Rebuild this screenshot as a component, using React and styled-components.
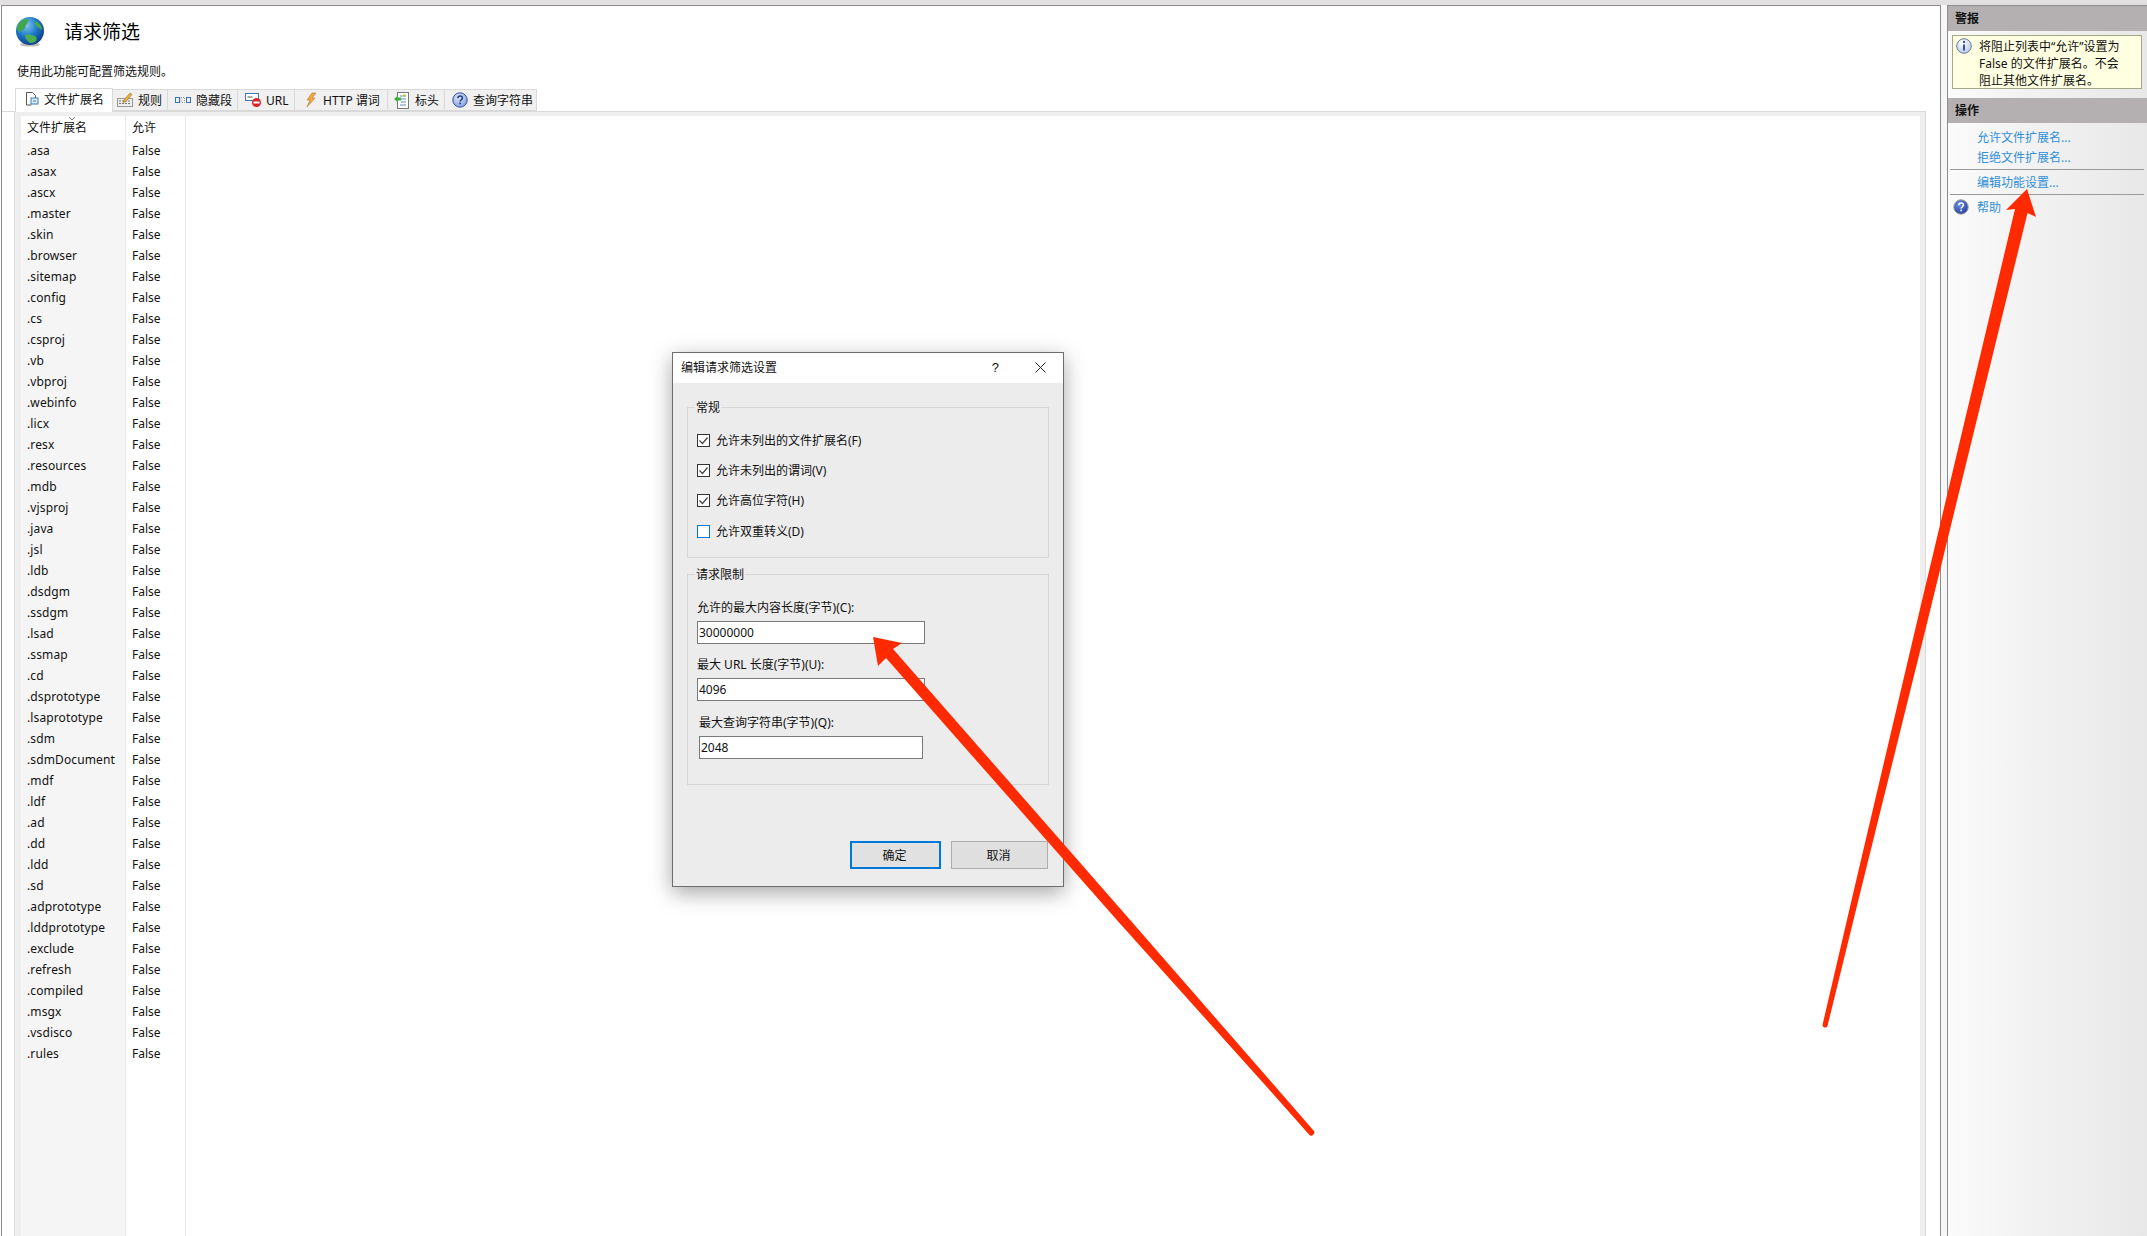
import React from 'react'
import styled, { createGlobalStyle } from 'styled-components'

const GlobalStyle = createGlobalStyle`
  html, body { margin: 0; padding: 0; background: #fff; }
  body {
    font-family: "Noto Sans", "Noto Sans CJK SC", sans-serif;
    font-size: 12px;
    color: #111;
  }
  * { box-sizing: border-box; }
`

const Page = styled.div`
  position: relative;
  width: 2147px;
  height: 1236px;
  overflow: hidden;
  display: flex;
  flex-direction: column;
`
const TopStrip = styled.div`
  height: 5px;
  flex: none;
  background: #e2e0e0;
`
const Workspace = styled.div`
  flex: 1;
  min-height: 0;
  display: flex;
  padding-left: 1px;
  gap: 6px;
  background: linear-gradient(90deg, #fff 1px, #f7f7f7 1px);
`
const Main = styled.main`
  width: 1940px;
  display: flex;
  flex-direction: column;
  background: #fff;
  border: 1px solid #8c8c8c;
  border-bottom: 0;
`
const TitleRow = styled.div`
  display: flex;
  align-items: center;
  gap: 19px;
  padding: 11px 0 0 13px;
`
const Title = styled.h1`
  margin: 0;
  font-size: 19px;
  font-weight: 400;
  line-height: 30px;
  color: #000;
`
const Description = styled.p`
  margin: 17px 0 0 15px;
  line-height: 16px;
`
const TabStrip = styled.div`
  display: flex;
  align-items: flex-end;
  height: 24px;
  margin: 8px 14px 0 0;
  padding-left: 13px;
  border-bottom: 1px solid #d9d9d9;
`
const Tab = styled.div`
  display: flex;
  align-items: center;
  gap: 5px;
  width: ${p => p.$width}px;
  height: ${p => (p.$active ? 24 : 22)}px;
  padding: 0 0 ${p => (p.$active ? 3 : 0)}px ${p => p.$pad}px;
  margin-bottom: ${p => (p.$active ? -1 : 0)}px;
  white-space: nowrap;
  background: ${p => (p.$active ? '#fff' : '#f0f0f0')};
  border: 1px solid #d9d9d9;
  border-left-width: ${p => (p.$active ? 1 : 0)}px;
  border-bottom-width: ${p => (p.$active ? 0 : 1)}px;
  svg { flex: none; }
`
const Frame = styled.div`
  flex: 1;
  min-height: 0;
  display: flex;
  margin: 0 14px 0 12px;
  padding: 4px 5px 0 6px;
  background: #eeeeee;
  border-left: 1px solid #dcdcdc;
  border-right: 1px solid #dcdcdc;
`
const ListPane = styled.div`
  flex: 1;
  display: flex;
  background: #fff;
`
const Column = styled.div`
  width: ${p => p.$width}px;
  border-right: 1px solid #e6ebf0;
  background: ${p => (p.$shaded ? '#f5f5f5' : '#fff')};
`
const ColumnHead = styled.div`
  position: relative;
  height: 24px;
  line-height: 24px;
  padding-left: 6px;
  background: #fff;
  svg { position: absolute; left: 47px; top: 0; }
`
const Cell = styled.div`
  height: 21px;
  line-height: 21px;
  padding-left: 6px;
  letter-spacing: ${p => (p.$wide ? 0.12 : 0)}px;
`

const Actions = styled.aside`
  width: 200px;
  border: 1px solid #8c8c8c;
  border-width: 1px 0 0 1px;
  background: linear-gradient(90deg, #fbfbfb, #f3f2f3 40%, #e8e8e8);
`
const ActionHead = styled.h2`
  margin: 0;
  height: 25px;
  line-height: 25px;
  padding-left: 7px;
  font-size: 12px;
  font-weight: 700;
  color: #111;
  background: #b4b0b2;
`
const Alert = styled.div`
  display: flex;
  gap: 7px;
  height: 54px;
  margin: 4px 5px 9px 4px;
  padding: 2px 0 0 3px;
  line-height: 17px;
  background: #ffffe1;
  border: 1px solid #a6a68a;
  white-space: nowrap;
  svg { flex: none; }
`
const ActionList = styled.div`
  padding-top: 4px;
`
const ActionLink = styled.a`
  display: flex;
  align-items: center;
  gap: 8px;
  height: 20px;
  padding-left: ${p => (p.$icon ? 5 : 29)}px;
  color: #2f8fd9;
`
const ActionRule = styled.div`
  height: 1px;
  margin: 2px 3px 2px 2px;
  background: #9a9a9a;
`

const Dialog = styled.section`
  position: absolute;
  left: 672px;
  top: 352px;
  width: 392px;
  height: 535px;
  background: #ececec;
  border: 1px solid #6d6d6d;
  box-shadow: 0 6px 20px rgba(0, 0, 0, 0.35);
`
const DialogBar = styled.header`
  display: flex;
  align-items: center;
  height: 30px;
  padding: 0 17px 2px 8px;
  background: #fff;
  color: #111;
`
const DialogTitle = styled.span`
  flex: 1;
`
const HelpMark = styled.span`
  margin-right: 36px;
  font-size: 13px;
  font-family: "Liberation Sans", sans-serif;
`
const DialogBody = styled.div`
  padding: 0 14px;
`
const Group = styled.div`
  position: relative;
  height: ${p => p.$height}px;
  margin-top: ${p => p.$top}px;
  padding: ${p => p.$padTop}px 9px 0;
  display: flex;
  flex-direction: column;
  border: 1px solid #d6d6d6;
`
const GroupLabel = styled.span`
  position: absolute;
  left: 7px;
  top: -8px;
  padding: 0 1px;
  line-height: 16px;
  background: #ececec;
`
const CheckRow = styled.label`
  display: flex;
  align-items: center;
  gap: 6px;
  height: 16px;
  margin-bottom: 14.4px;
`
const CheckText = styled.span`
  margin-top: -1px;
`
const CheckBox = styled.span`
  display: flex;
  width: 13px;
  height: 13px;
  background: #fff;
  border: 1px solid ${p => (p.$checked ? '#333' : '#0078d7')};
`
const Field = styled.div`
  display: flex;
  flex-direction: column;
  gap: 5px;
  margin-bottom: ${p => p.$after}px;
  padding-left: ${p => p.$indent}px;
`
const FieldLabel = styled.label`
  line-height: 16px;
`
const TextInput = styled.input`
  width: ${p => p.$width}px;
  height: 23px;
  padding: 0 1px;
  margin: 0;
  font: inherit;
  color: #111;
  background: #fff;
  border: 1px solid #7a7a7a;
  border-radius: 0;
  outline: none;
`
const DialogFooter = styled.footer`
  display: flex;
  justify-content: flex-end;
  gap: 10px;
  margin: 56px 1px 0 0;
`
const Button = styled.button`
  width: ${p => p.$width}px;
  height: 28px;
  padding: 0 2px 0 0;
  font: inherit;
  color: #111;
  background: ${p => (p.$primary ? '#e1e1e1' : '#dfdfdf')};
  border: ${p => (p.$primary ? '2px solid #0078d7' : '1px solid #adadad')};
  border-radius: 0;
`
const ArrowLayer = styled.svg`
  position: absolute;
  left: 0;
  top: 0;
  pointer-events: none;
`

const GlobeIcon = () => (
  <svg width="30" height="30" viewBox="0 0 30 30">
    <defs>
      <radialGradient id="sea" cx="0.38" cy="0.3" r="0.8">
        <stop offset="0" stopColor="#7fc6f2" />
        <stop offset="0.5" stopColor="#1c77c6" />
        <stop offset="1" stopColor="#0b2f78" />
      </radialGradient>
    </defs>
    <ellipse cx="15" cy="27.5" rx="10" ry="2" fill="#bdbdbd" />
    <circle cx="15" cy="14" r="14" fill="url(#sea)" />
    <path d="M4 6c3-3 6-4 9-4 1 2-1 3-1 5-2 1-1 4-3 5-1 2-3 1-4 3-2-1-3-2-3-4 0-2 1-4 2-5z" fill="#3fa64a" />
    <path d="M10 18c3-1 7 0 10 1 2 1 2 3 1 5-2 2-4 2-6 2-3-2-5-5-5-8z" fill="#4cae4f" />
    <path d="M21 4c2 1 4 3 5 5 1 2 1 3 0 4-2-2-4-4-6-5 0-2 0-3 1-4z" fill="#4aa84c" />
  </svg>
)
const DocIcon = () => (
  <svg width="15" height="16" viewBox="0 0 15 16">
    <path d="M2.5 1.5h6l3 3v3M2.5 1.5v12.5h5" fill="#fff" stroke="#555" />
    <rect x="7" y="7" width="7" height="6" fill="#dcecf8" stroke="#3a7fb8" />
    <path d="M9 10h3" stroke="#3a7fb8" />
  </svg>
)
const RulesIcon = () => (
  <svg width="16" height="16" viewBox="0 0 16 16">
    <rect x="0.5" y="6.5" width="15" height="8" fill="#eee" stroke="#999" />
    <path d="M2 9h12M2 11.5h12" stroke="#777" strokeDasharray="2 1" />
    <path d="M7 8l6-7 2 1.5-6 7-3 1z" fill="#e8b13d" stroke="#a86f1c" strokeWidth="0.6" />
  </svg>
)
const SegmentIcon = () => (
  <svg width="16" height="16" viewBox="0 0 16 16">
    <rect x="0.5" y="5.5" width="4" height="5" fill="none" stroke="#3a6fb0" />
    <rect x="6" y="5.5" width="3.5" height="5" fill="none" stroke="#999" strokeDasharray="1 1" />
    <rect x="11.5" y="5.5" width="4" height="5" fill="none" stroke="#3a6fb0" />
  </svg>
)
const UrlIcon = () => (
  <svg width="16" height="16" viewBox="0 0 16 16">
    <rect x="0.5" y="1.5" width="13" height="7" fill="#fff" stroke="#3f78b5" />
    <path d="M2.5 5h5" stroke="#555" />
    <circle cx="11.5" cy="10.5" r="4.5" fill="#d8232a" />
    <rect x="8.5" y="9.5" width="6" height="2" fill="#fff" />
  </svg>
)
const BoltIcon = () => (
  <svg width="14" height="16" viewBox="0 0 14 16">
    <path d="M8 1h4L8 6h3l-8 9 3-7H3z" fill="#f0a93a" stroke="#b8742a" strokeWidth="0.6" />
  </svg>
)
const HeaderIcon = () => (
  <svg width="16" height="17" viewBox="0 0 16 17">
    <rect x="3.5" y="0.5" width="11" height="16" fill="#fff" stroke="#777" />
    <path d="M6 4h6M7 7h5M7 10h5M6 13h6" stroke="#5b8fc0" />
    <path d="M9 3.5h3" stroke="#b9c83a" strokeWidth="2" />
    <path d="M0 7l4-3.5v2h3v3H4v2z" fill="#3fae3f" />
  </svg>
)
const HelpIcon = ({ id, light }) => (
  <svg width="16" height="16" viewBox="0 0 16 16">
    <defs>
      <radialGradient id={id} cx="0.4" cy="0.3" r="0.8">
        <stop offset="0" stopColor={light ? '#dfe6f7' : '#6f8fe0'} />
        <stop offset="1" stopColor={light ? '#7f9ad8' : '#1b3a9c'} />
      </radialGradient>
    </defs>
    <circle cx="8" cy="8" r="7.2" fill={`url(#${id})`} stroke={light ? '#33549f' : '#9a9a9a'} />
    <path
      d="M5.8 6.2c0-3 4.6-3 4.6-.2 0 1.8-2.3 1.8-2.3 3.6"
      fill="none"
      stroke={light ? '#1f3f8f' : '#fff'}
      strokeWidth="1.5"
    />
    <rect x="7.3" y="10.6" width="1.6" height="1.7" fill={light ? '#1f3f8f' : '#fff'} />
  </svg>
)
const InfoIcon = () => (
  <svg width="16" height="16" viewBox="0 0 16 16">
    <defs>
      <radialGradient id="infoFill" cx="0.4" cy="0.3" r="0.9">
        <stop offset="0" stopColor="#fff" />
        <stop offset="1" stopColor="#a9bddf" />
      </radialGradient>
    </defs>
    <circle cx="8" cy="8" r="7.3" fill="url(#infoFill)" stroke="#6a7a9a" />
    <rect x="7" y="3" width="2" height="2" fill="#2b55a8" />
    <rect x="7" y="6.5" width="2" height="6" fill="#2b55a8" />
  </svg>
)
const CheckMark = () => (
  <svg width="11" height="11" viewBox="0 0 11 11">
    <path d="M1.5 5.5l3 3 5-6" fill="none" stroke="#444" strokeWidth="1.2" />
  </svg>
)

const tabs = [
  { label: '文件扩展名', icon: <DocIcon />, width: 98, pad: 8, active: true },
  { label: '规则', icon: <RulesIcon />, width: 55, pad: 4 },
  { label: '隐藏段', icon: <SegmentIcon />, width: 70, pad: 7 },
  { label: 'URL', icon: <UrlIcon />, width: 57, pad: 7 },
  { label: 'HTTP 谓词', icon: <BoltIcon />, width: 93, pad: 9 },
  { label: '标头', icon: <HeaderIcon />, width: 57, pad: 6 },
  { label: '查询字符串', icon: <HelpIcon id="tabHelp" light />, width: 92, pad: 7 },
]

const extensions = [
  '.asa', '.asax', '.ascx', '.master', '.skin', '.browser', '.sitemap', '.config', '.cs', '.csproj', '.vb',
  '.vbproj', '.webinfo', '.licx', '.resx', '.resources', '.mdb', '.vjsproj', '.java', '.jsl', '.ldb', '.dsdgm',
  '.ssdgm', '.lsad', '.ssmap', '.cd', '.dsprototype', '.lsaprototype', '.sdm', '.sdmDocument', '.mdf', '.ldf',
  '.ad', '.dd', '.ldd', '.sd', '.adprototype', '.lddprototype', '.exclude', '.refresh', '.compiled', '.msgx',
  '.vsdisco', '.rules',
]

const checks = [
  { label: '允许未列出的文件扩展名(F)', checked: true },
  { label: '允许未列出的谓词(V)', checked: true },
  { label: '允许高位字符(H)', checked: true },
  { label: '允许双重转义(D)', checked: false },
]

const fields = [
  { label: '允许的最大内容长度(字节)(C):', value: '30000000', width: 228, indent: 0, after: 13 },
  { label: '最大 URL 长度(字节)(U):', value: '4096', width: 228, indent: 0, after: 14 },
  { label: '最大查询字符串(字节)(Q):', value: '2048', width: 224, indent: 2, after: 0 },
]

export default function App() {
  return (
    <Page>
      <GlobalStyle />
      <TopStrip />
      <Workspace>
        <Main>
          <TitleRow>
            <GlobeIcon />
            <Title>请求筛选</Title>
          </TitleRow>
          <Description>使用此功能可配置筛选规则。</Description>
          <TabStrip>
            {tabs.map(t => (
              <Tab key={t.label} $width={t.width} $pad={t.pad} $active={t.active}>
                {t.icon}
                {t.label}
              </Tab>
            ))}
          </TabStrip>
          <Frame>
            <ListPane>
              <Column $width={105} $shaded>
                <ColumnHead>
                  文件扩展名
                  <svg width="8" height="5" viewBox="0 0 8 5">
                    <path d="M1 1l3 3 3-3" fill="none" stroke="#888" />
                  </svg>
                </ColumnHead>
                {extensions.map(x => <Cell key={x} $wide>{x}</Cell>)}
              </Column>
              <Column $width={60}>
                <ColumnHead>允许</ColumnHead>
                {extensions.map(x => <Cell key={x}>False</Cell>)}
              </Column>
            </ListPane>
          </Frame>
        </Main>
        <Actions>
          <ActionHead>警报</ActionHead>
          <Alert>
            <InfoIcon />
            <div>
              将阻止列表中“允许”设置为<br />
              False 的文件扩展名。不会<br />
              阻止其他文件扩展名。
            </div>
          </Alert>
          <ActionHead>操作</ActionHead>
          <ActionList>
            <ActionLink>允许文件扩展名...</ActionLink>
            <ActionLink>拒绝文件扩展名...</ActionLink>
            <ActionRule />
            <ActionLink>编辑功能设置...</ActionLink>
            <ActionRule />
            <ActionLink $icon><HelpIcon id="actionHelp" />帮助</ActionLink>
          </ActionList>
        </Actions>
      </Workspace>

      <Dialog>
        <DialogBar>
          <DialogTitle>编辑请求筛选设置</DialogTitle>
          <HelpMark>?</HelpMark>
          <svg width="11" height="11" viewBox="0 0 11 11">
            <path d="M0.5 0.5l10 10M10.5 0.5l-10 10" stroke="#222" />
          </svg>
        </DialogBar>
        <DialogBody>
          <Group $top={24} $height={151} $padTop={24}>
            <GroupLabel>常规</GroupLabel>
            {checks.map(c => (
              <CheckRow key={c.label}>
                <CheckBox $checked={c.checked}>{c.checked && <CheckMark />}</CheckBox>
                <CheckText>{c.label}</CheckText>
              </CheckRow>
            ))}
          </Group>
          <Group $top={16} $height={211} $padTop={25}>
            <GroupLabel>请求限制</GroupLabel>
            {fields.map(f => (
              <Field key={f.label} $after={f.after} $indent={f.indent}>
                <FieldLabel>{f.label}</FieldLabel>
                <TextInput $width={f.width} defaultValue={f.value} />
              </Field>
            ))}
          </Group>
          <DialogFooter>
            <Button $primary $width={91}>确定</Button>
            <Button $width={97}>取消</Button>
          </DialogFooter>
        </DialogBody>
      </Dialog>

      <ArrowLayer width="2147" height="1236" viewBox="0 0 2147 1236">
        <path
          d="M873 637L902 643L893 649L1127.3 916.7L1272 1082.8L1313.5 1130.5A3 3 0 0 1 1309 1134.5L1267.1 1087.2L1119.7 923.3L886 658L878 666Z"
          fill="#ff2a00"
        />
        <path
          d="M2027 189L2036 217L2027.5 213L1927.8 620L1858.4 900L1827.5 1026A2.6 2.6 0 0 1 1822.5 1025L1851.6 900L1917.4 620L2015 209L2006 210Z"
          fill="#ff2a00"
        />
      </ArrowLayer>
    </Page>
  )
}
